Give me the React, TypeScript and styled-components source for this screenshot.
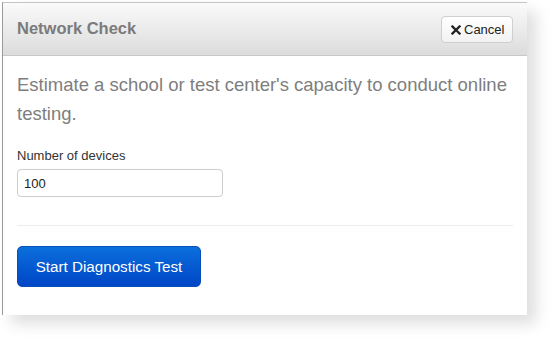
import styled, { createGlobalStyle } from "styled-components";

const GlobalStyle = createGlobalStyle`
  html, body {
    margin: 0;
    padding: 0;
    background: #ffffff;
    font-family: "Liberation Sans", Arial, sans-serif;
  }
`;

function CloseIcon() {
  return (
    <svg width="10" height="10" viewBox="0 0 10 10" aria-hidden="true">
      <path d="M1.5 1.5 L8.5 8.5 M8.5 1.5 L1.5 8.5" stroke="#222" strokeWidth="2.3" strokeLinecap="square" />
    </svg>
  );
}

export default function App() {
  return (
    <Page>
      <GlobalStyle />
      <Dialog>
        <Header>
          <Title>Network Check</Title>
          <CancelButton type="button">
            <CloseIcon />
            Cancel
          </CancelButton>
        </Header>
        <Body>
          <Lead>Estimate a school or test center's capacity to conduct online testing.</Lead>
          <Label htmlFor="devices">Number of devices</Label>
          <TextInput id="devices" type="text" defaultValue="100" />
          <Divider />
          <PrimaryButton type="button">Start Diagnostics Test</PrimaryButton>
        </Body>
      </Dialog>
    </Page>
  );
}

const Page = styled.div`
  width: 550px;
  height: 338px;
  padding: 2px 0 0 2px;
  box-sizing: border-box;
  overflow: hidden;
`;

const Dialog = styled.div`
  width: 525px;
  height: 313px;
  box-sizing: border-box;
  background: #ffffff;
  border-left: 1px solid #9a9a9a;
  border-top: 1px solid #c4c4c4;
  box-shadow: 9px 9px 14px rgba(0, 0, 0, 0.13);
  display: flex;
  flex-direction: column;
`;

const Header = styled.div`
  height: 53px;
  box-sizing: border-box;
  display: flex;
  align-items: center;
  justify-content: space-between;
  padding: 0 14px 0 14px;
  background: linear-gradient(to bottom, #fafafa, #dcdcdc);
  border-bottom: 1px solid #c8c8c8;
`;

const Title = styled.h1`
  margin: 0 0 1px 0;
  font-size: 16.5px;
  font-weight: bold;
  color: #7b7b7b;
`;

const CancelButton = styled.button`
  display: flex;
  align-items: center;
  gap: 3px;
  width: 72px;
  height: 27px;
  padding: 0 0 0 9px;
  margin-top: 1px;
  box-sizing: border-box;
  font-family: "Liberation Sans", Arial, sans-serif;
  font-size: 13px;
  color: #222;
  background: linear-gradient(to bottom, #ffffff, #f2f2f2);
  border: 1px solid #cfcfcf;
  border-radius: 4px;
`;

const Body = styled.div`
  padding: 14px 14px 0 14px;
  display: flex;
  flex-direction: column;
  align-items: flex-start;
`;

const Lead = styled.p`
  margin: 0;
  font-size: 18.5px;
  line-height: 29px;
  color: #7e7e7e;
  font-weight: 300;
`;

const Label = styled.label`
  margin-top: 20px;
  font-size: 13px;
  line-height: 16px;
  color: #333;
`;

const TextInput = styled.input`
  margin-top: 5px;
  width: 206px;
  height: 28px;
  box-sizing: border-box;
  padding: 0 6px;
  font-family: "Liberation Sans", Arial, sans-serif;
  font-size: 13px;
  color: #222;
  border: 1px solid #cccccc;
  border-radius: 4px;
  outline: none;
`;

const Divider = styled.hr`
  align-self: stretch;
  margin: 28px 0 0 0;
  border: none;
  border-top: 1px solid #ececec;
`;

const PrimaryButton = styled.button`
  margin-top: 20px;
  width: 184px;
  height: 41px;
  font-family: "Liberation Sans", Arial, sans-serif;
  font-size: 15.2px;
  color: #ffffff;
  background: linear-gradient(to bottom, #0b6fdb, #0046c7);
  border: 1px solid #0a4fb8;
  border-radius: 5px;
`;
